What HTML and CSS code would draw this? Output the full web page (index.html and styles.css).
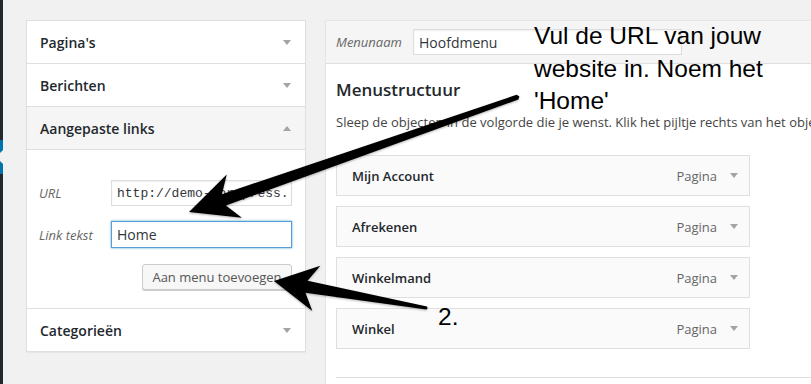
FILE: index.html
```html
<!DOCTYPE html>
<html lang="nl">
<head>
  <meta charset="UTF-8">
  <meta name="viewport" content="width=device-width, initial-scale=1.0">
  <link rel="stylesheet" href="styles.css">
  <title>Menu's</title>
</head>
<body>
  <div class="adminmenu">
    <div class="current"></div>
  </div>

  <div class="page">
    <div class="accordion">
      <div class="section">
        <h3 class="section-title">Pagina's <span class="toggle"></span></h3>
      </div>
      <div class="section">
        <h3 class="section-title">Berichten <span class="toggle"></span></h3>
      </div>
      <div class="section open">
        <h3 class="section-title">Aangepaste links <span class="toggle up"></span></h3>
        <div class="section-body">
          <p class="field">
            <label for="custom-url">URL</label>
            <input type="text" id="custom-url" class="code" value="http://demo-wordpress.nl/">
          </p>
          <p class="field">
            <label for="custom-text">Link tekst</label>
            <input type="text" id="custom-text" class="focus" value="Home">
          </p>
          <p class="buttons">
            <button class="button">Aan menu toevoegen</button>
          </p>
        </div>
      </div>
      <div class="section">
        <h3 class="section-title">Categorieën <span class="toggle"></span></h3>
      </div>
    </div>

    <div class="menu-edit">
      <div class="menu-header">
        <label for="menu-name">Menunaam</label>
        <input type="text" id="menu-name" value="Hoofdmenu">
      </div>
      <div class="menu-body">
        <h3>Menustructuur</h3>
        <p class="desc">Sleep de objecten in de volgorde die je wenst. Klik het pijltje rechts van het object om meer configuratie-opties te zien.</p>
        <ul class="menu-items">
          <li><span class="item-title">Mijn Account</span><span class="item-type">Pagina</span><span class="toggle"></span></li>
          <li><span class="item-title">Afrekenen</span><span class="item-type">Pagina</span><span class="toggle"></span></li>
          <li><span class="item-title">Winkelmand</span><span class="item-type">Pagina</span><span class="toggle"></span></li>
          <li><span class="item-title">Winkel</span><span class="item-type">Pagina</span><span class="toggle"></span></li>
        </ul>
      </div>
      <div class="menu-footer"></div>
    </div>
  </div>

  <!-- annotations drawn over the screenshot -->
  <div class="note note-main">Vul de URL van jouw website in. Noem het 'Home'</div>
  <div class="note note-step">2.</div>
  <svg class="arrows" width="811" height="384" viewBox="0 0 811 384">
    <g transform="translate(189 212) rotate(-19.27)">
      <polygon points="0,0 48,-23 37,-6 348,-2.5 350,0 348,2.5 37,6 48,23"/>
    </g>
    <g transform="translate(274 281) rotate(10)">
      <polygon points="0,0 43,-23 33,-6 155,-1.5 156,0 155,1.5 33,6 43,23"/>
    </g>
  </svg>
</body>
</html>
```

FILE: styles.css
```css
body {
  margin: 0;
  height: 384px;
  overflow: hidden;
  display: flex;
  background: #f1f1f1;
  font-family: 'Open Sans', sans-serif;
  font-size: 13px;
  color: #444;
}

.adminmenu {
  width: 3px;
  flex-shrink: 0;
  background: #23282d;
}

.adminmenu .current {
  position: relative;
  margin-top: 140px;
  height: 34px;
  background: #0073aa;
}

.adminmenu .current::after {
  content: "";
  position: absolute;
  right: 0;
  top: 10px;
  border-top: 7px solid transparent;
  border-bottom: 7px solid transparent;
  border-right: 7px solid #f1f1f1;
}

.page {
  display: flex;
  align-items: flex-start;
  gap: 19px;
  padding: 20px 0 0 23px;
}

/* left column */

.accordion {
  width: 280px;
  box-sizing: border-box;
  flex-shrink: 0;
  background: #fff;
  border: 1px solid #dfdfdf;
  box-shadow: 0 1px 1px rgba(0, 0, 0, 0.04);
}

.section + .section {
  border-top: 1px solid #dfdfdf;
}

.section-title {
  margin: 0;
  height: 42px;
  padding: 0 14px 0 13px;
  display: flex;
  align-items: center;
  justify-content: space-between;
  font-size: 14px;
  font-weight: 600;
  color: #23282d;
}

.open .section-title {
  background: #f5f5f5;
  border-bottom: 1px solid #dfdfdf;
}

.toggle {
  width: 0;
  height: 0;
  border-left: 4px solid transparent;
  border-right: 4px solid transparent;
  border-top: 5px solid #a0a5aa;
}

.toggle.up {
  border-top: none;
  border-bottom: 5px solid #a0a5aa;
}

.section-body {
  height: 158px;
  box-sizing: border-box;
  padding: 30px 13px 0 12px;
}

.field {
  display: flex;
  align-items: center;
  margin: 0 0 15px;
}

.field label {
  width: 72px;
  flex-shrink: 0;
  font-style: italic;
  color: #666;
}

input {
  height: 26px;
  box-sizing: border-box;
  padding: 0 5px;
  border: 1px solid #ddd;
  box-shadow: inset 0 1px 2px rgba(0, 0, 0, 0.07);
  background: #fff;
  color: #32373c;
  font-family: 'Open Sans', sans-serif;
  font-size: 14px;
  outline: none;
}

.field input {
  flex: 1;
  min-width: 0;
}

input.code {
  font-family: 'Liberation Mono', monospace;
  font-size: 13px;
}

input.focus {
  height: 27px;
  border-color: #5b9dd9;
  box-shadow: 0 0 2px rgba(30, 140, 190, 0.8);
}

.buttons {
  display: flex;
  justify-content: flex-end;
  margin: 16px 0 0;
}

.button {
  width: 150px;
  height: 26px;
  padding: 0 4px;
  border: 1px solid #ccc;
  border-radius: 3px;
  background: #f7f7f7;
  box-shadow: 0 1px 0 #ccc;
  color: #555;
  font-family: 'Open Sans', sans-serif;
  font-size: 13px;
  white-space: nowrap;
}

/* right column */

.menu-edit {
  width: 600px;
  flex-shrink: 0;
  background: #fff;
  border: 1px solid #e5e5e5;
  box-shadow: 0 1px 1px rgba(0, 0, 0, 0.04);
}

.menu-header {
  height: 42px;
  padding: 0 10px;
  display: flex;
  align-items: center;
  background: #f5f5f5;
  border-bottom: 1px solid #dfdfdf;
}

.menu-header label {
  width: 77px;
  font-style: italic;
  color: #666;
}

.menu-header input {
  width: 269px;
}

.menu-body {
  padding: 0 10px 18px;
}

.menu-body h3 {
  margin: 14px 0 10px;
  font-size: 17px;
  line-height: 24px;
  font-weight: 600;
  color: #23282d;
}

.desc {
  margin: 0 0 23px;
  line-height: 20px;
  white-space: nowrap;
}

.menu-items {
  list-style: none;
  margin: 0;
  padding: 0;
}

.menu-items li {
  width: 414px;
  height: 41px;
  box-sizing: border-box;
  margin-bottom: 10px;
  padding: 0 11px 0 15px;
  display: flex;
  align-items: center;
  background: #fafafa;
  border: 1px solid #dfdfdf;
}

.item-title {
  flex: 1;
  font-weight: 600;
  color: #23282d;
}

.item-type {
  margin-right: 13px;
  color: #666;
}

.menu-footer {
  margin: 0 10px;
  height: 20px;
  border-top: 1px solid #dfdfdf;
}

/* annotations */

.note {
  position: absolute;
  font-family: 'Liberation Sans', Arial, sans-serif;
  font-size: 24.5px;
  line-height: 32.5px;
  color: #000;
}

.note-main {
  left: 534px;
  top: 20px;
  width: 250px;
}

.note-step {
  left: 438px;
  top: 301px;
}

.arrows {
  position: absolute;
  left: 0;
  top: 0;
  pointer-events: none;
  filter: drop-shadow(0 1px 1px rgba(0, 0, 0, 0.3));
}

.arrows polygon {
  fill: #000;
}
```
